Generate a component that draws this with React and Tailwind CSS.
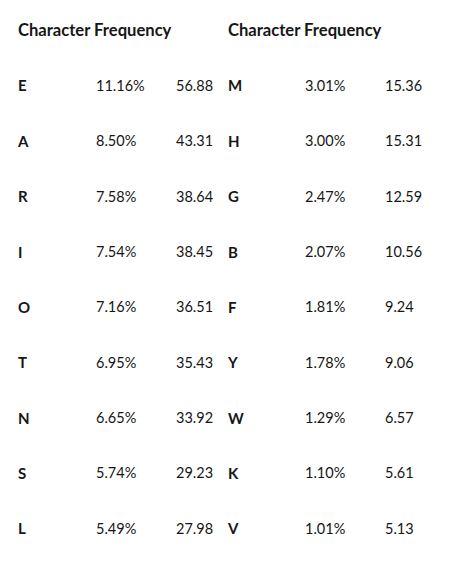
import React from "react";

const left = [
  ["E", "11.16%", "56.88"],
  ["A", "8.50%", "43.31"],
  ["R", "7.58%", "38.64"],
  ["I", "7.54%", "38.45"],
  ["O", "7.16%", "36.51"],
  ["T", "6.95%", "35.43"],
  ["N", "6.65%", "33.92"],
  ["S", "5.74%", "29.23"],
  ["L", "5.49%", "27.98"],
];
const right = [
  ["M", "3.01%", "15.36"],
  ["H", "3.00%", "15.31"],
  ["G", "2.47%", "12.59"],
  ["B", "2.07%", "10.56"],
  ["F", "1.81%", "9.24"],
  ["Y", "1.78%", "9.06"],
  ["W", "1.29%", "6.57"],
  ["K", "1.10%", "5.61"],
  ["V", "1.01%", "5.13"],
];

export default function App() {
  return (
    <div
      className="w-[474px] h-[568px] bg-white text-[#161616] pl-[18px] pt-[2.6px]"
      style={{ fontFamily: "Lato, 'Open Sans', sans-serif" }}
    >
      <div className="grid grid-cols-[78px_80px_52px_77px_80px_1fr] auto-rows-[55.375px] items-center text-[14.5px]">
        <div className="col-span-3 font-bold text-[16.6px]">Character Frequency</div>
        <div className="col-span-3 font-bold text-[16.6px]">Character Frequency</div>
        {left.map((l, i) => (
          <React.Fragment key={l[0]}>
            <div className="font-bold text-[15px]">{l[0]}</div>
            <div>{l[1]}</div>
            <div>{l[2]}</div>
            <div className="font-bold text-[15px]">{right[i][0]}</div>
            <div>{right[i][1]}</div>
            <div>{right[i][2]}</div>
          </React.Fragment>
        ))}
      </div>
    </div>
  );
}
